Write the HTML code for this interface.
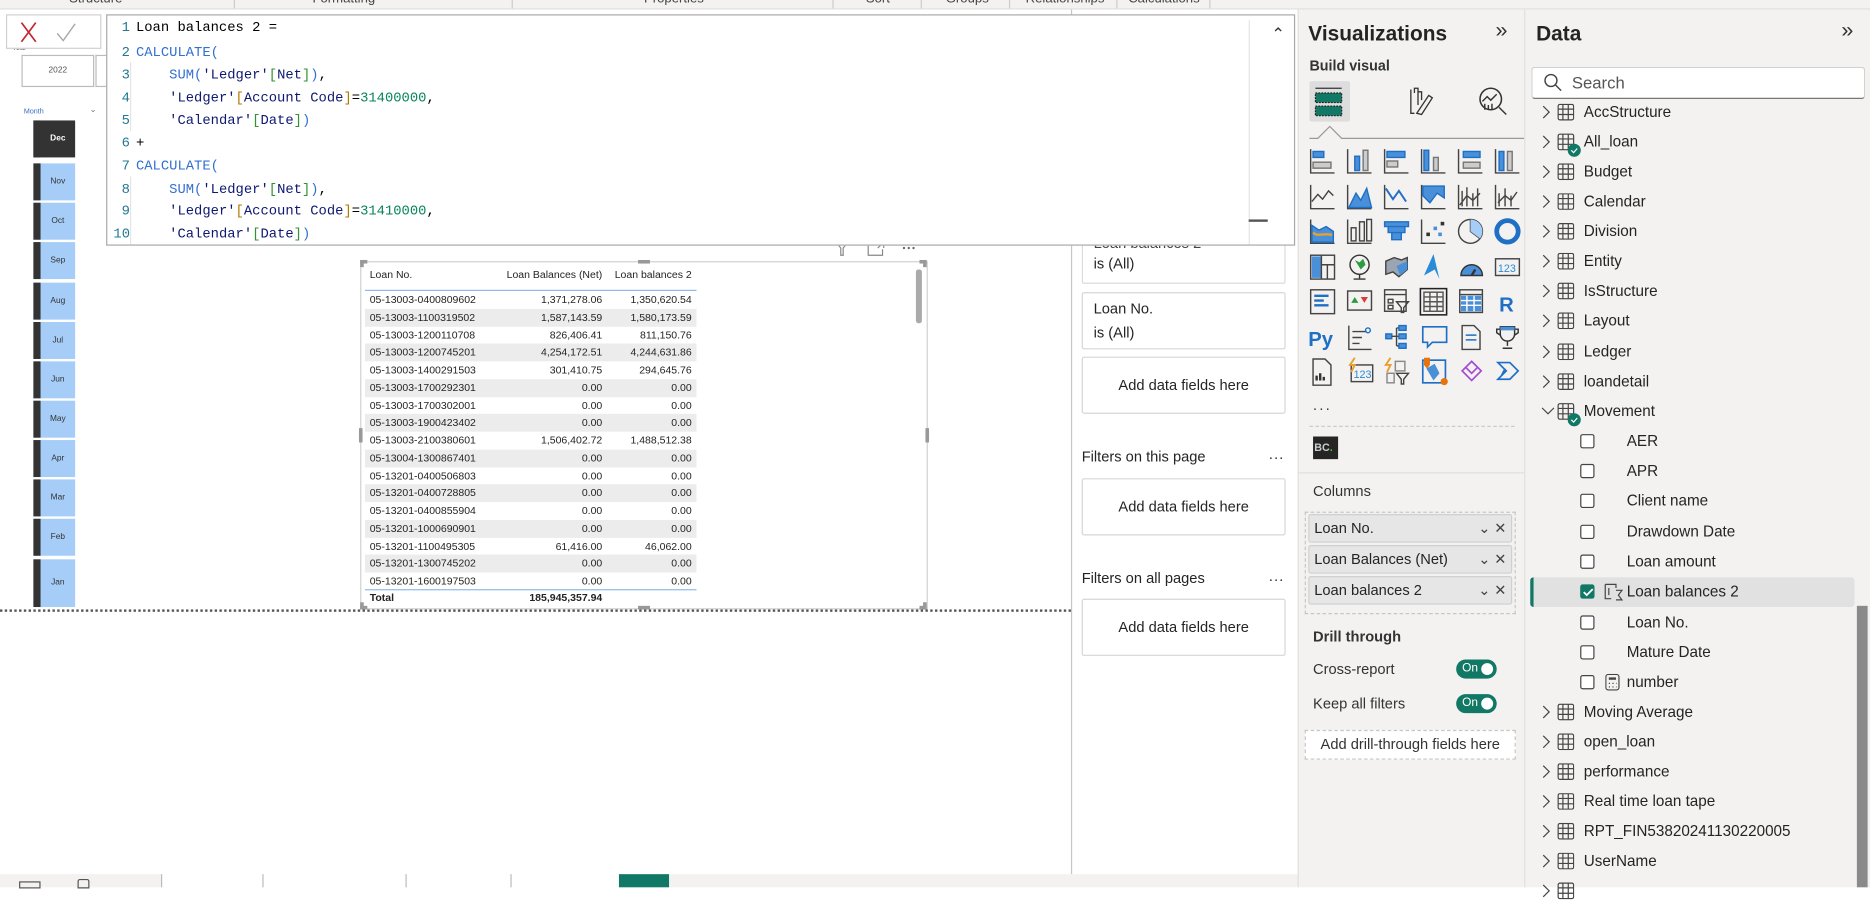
<!DOCTYPE html>
<html><head><meta charset="utf-8">
<style>
*{margin:0;padding:0;box-sizing:border-box}
html,body{width:1870px;height:887px;overflow:hidden;background:#fff}
#w{position:absolute;left:0;top:0;width:1568px;height:744px;transform:scale(1.19260);transform-origin:0 0;font-family:"Liberation Sans",sans-serif;color:#252423}
.a{position:absolute}
.mono{position:absolute;left:0;top:2px;font-family:"Liberation Mono",monospace;font-size:11.6px;white-space:pre;z-index:6}
.mono div{line-height:14px}
.ln{position:absolute;left:92px;width:17px;text-align:right;color:#237893}
.cd{position:absolute;left:114px;color:#000}
.f{color:#3370d0}.s{color:#0e1870}.b1{color:#319331}.b2{color:#b47900}.n{color:#098658}
.mb{position:absolute;left:28px;width:35px;height:31px;background:#a5cdf8;border-left:6px solid #333;font-size:7px;text-align:center;line-height:31px;color:#333}
.tr{position:absolute;left:306px;width:278px;height:14.75px;font-size:8.8px;line-height:14.75px;color:#252423}
.tr span{position:absolute}
.tr .c1{left:4px}.tr .c2{right:79px}.tr .c3{right:4px}
.g{background:#ececec}
.card{position:absolute;left:907px;width:171px;background:#fff;border:1px solid #d6d6d6;border-radius:2px;font-size:12.3px}
.ctr{text-align:center}
.ft{position:absolute;left:907px;font-size:12.3px;color:#252423}
.dot{position:absolute;left:1064px;font-size:12px;letter-spacing:1px}
.pill{position:absolute;left:1097px;width:171px;height:24px;background:#e6e6e6;border:1px solid #d0d0d0;border-radius:2px;font-size:12.3px;line-height:22px;padding-left:4px}
.pill i{position:absolute;right:4px;top:0;font-style:normal;font-size:12px;color:#444}
.ti{position:absolute;left:1292px;height:20px;font-size:12.8px;line-height:20px;color:#252423}
.ti .ch{position:absolute;left:0;top:4px}
.ti .tb{position:absolute;left:14px;top:3px}
.ti .tx{position:absolute;left:36px;white-space:nowrap}
.sub{position:absolute;left:1325px;height:20px;font-size:12.8px;line-height:20px}
.sub .cb{position:absolute;left:0;top:4px;width:12px;height:12px;border:1px solid #444;border-radius:2px;background:#fff}
.sub .tx{position:absolute;left:39px;white-space:nowrap}
.tog{position:absolute;left:1221px;width:34px;height:16px;background:#117865;border-radius:8px;color:#fff;font-size:10px;line-height:16px;padding-left:5px}
.tog b{position:absolute;right:3px;top:3px;width:10px;height:10px;border-radius:5px;background:#fff}
</style></head><body><div id="w">

<div class="a" style="left:0;top:0;width:1568px;height:8px;background:#f3f2f1;border-bottom:1px solid #e1dfdd;overflow:hidden">
 <div class="a" style="left:58px;top:-7px;font-size:11px;color:#444">Structure</div>
 <div class="a" style="left:196px;top:0;width:1px;height:8px;background:#ccc"></div>
 <div class="a" style="left:262px;top:-7px;font-size:11px;color:#444">Formatting</div>
 <div class="a" style="left:429px;top:0;width:1px;height:8px;background:#ccc"></div>
 <div class="a" style="left:540px;top:-7px;font-size:11px;color:#444">Properties</div>
 <div class="a" style="left:698px;top:0;width:1px;height:8px;background:#ccc"></div>
 <div class="a" style="left:726px;top:-7px;font-size:11px;color:#444">Sort</div>
 <div class="a" style="left:772px;top:0;width:1px;height:8px;background:#ccc"></div>
 <div class="a" style="left:793px;top:-7px;font-size:11px;color:#444">Groups</div>
 <div class="a" style="left:846px;top:0;width:1px;height:8px;background:#ccc"></div>
 <div class="a" style="left:860px;top:-7px;font-size:11px;color:#444">Relationships</div>
 <div class="a" style="left:936px;top:0;width:1px;height:8px;background:#ccc"></div>
 <div class="a" style="left:946px;top:-7px;font-size:11px;color:#444">Calculations</div>
 <div class="a" style="left:1014px;top:0;width:1px;height:8px;background:#ccc"></div>
</div>

<div class="a" style="left:10px;top:38px;font-size:6px;color:#555">Year</div>
<div class="a" style="left:18px;top:46px;width:61px;height:27px;border:1px solid #bbb;font-size:7px;text-align:center;line-height:26px;color:#555">2022</div>
<div class="a" style="left:80px;top:46px;width:10px;height:27px;border:1px solid #bbb;border-right:none"></div>
<div class="a" style="left:20px;top:91px;font-size:6px;color:#3a6fc0">Month</div>
<div class="a" style="left:75px;top:88px;font-size:7px;color:#777">&#8964;</div>
<div class="mb" style="top:101px;background:#333;color:#fff;font-weight:bold">Dec</div>
<div class="mb" style="top:137px">Nov</div>
<div class="mb" style="top:170px">Oct</div>
<div class="mb" style="top:203px">Sep</div>
<div class="mb" style="top:237px">Aug</div>
<div class="mb" style="top:270px">Jul</div>
<div class="mb" style="top:303px">Jun</div>
<div class="mb" style="top:336px">May</div>
<div class="mb" style="top:369px">Apr</div>
<div class="mb" style="top:402px">Mar</div>
<div class="mb" style="top:435px">Feb</div>
<div class="mb" style="top:469px;height:40px;line-height:40px">Jan</div>

<div class="a" style="left:0;top:511px;width:898px;height:0;border-top:2px dotted #555"></div>

<div class="a" style="left:302px;top:219px;width:476px;height:292px;border:1px solid #d0d0d0"></div>
<div class="a" style="left:302px;top:218px;width:6px;height:6px;border-left:3px solid #999;border-top:3px solid #999"></div>
<div class="a" style="left:771px;top:218px;width:6px;height:6px;border-right:3px solid #999;border-top:3px solid #999"></div>
<div class="a" style="left:302px;top:505px;width:6px;height:6px;border-left:3px solid #999;border-bottom:3px solid #999"></div>
<div class="a" style="left:771px;top:505px;width:6px;height:6px;border-right:3px solid #999;border-bottom:3px solid #999"></div>
<div class="a" style="left:535px;top:218px;width:10px;height:3px;background:#999"></div>
<div class="a" style="left:535px;top:508px;width:10px;height:3px;background:#999"></div>
<div class="a" style="left:301px;top:359px;width:3px;height:12px;background:#999"></div>
<div class="a" style="left:776px;top:359px;width:3px;height:12px;background:#999"></div>
<div class="a" style="left:768px;top:226px;width:5px;height:45px;background:#aaa;border-radius:2px"></div>
<svg class="a" style="left:698px;top:200px" width="80" height="16"><path d="M3 3h10l-4 5v6h-2v-6z" fill="none" stroke="#888"/><path d="M30 5h4M30 5v9h12v-5M38 3h5v5M43 3l-5 5" fill="none" stroke="#888"/><circle cx="60" cy="8" r="1" fill="#666"/><circle cx="64" cy="8" r="1" fill="#666"/><circle cx="68" cy="8" r="1" fill="#666"/></svg>

<div class="tr" style="top:223px"><span class="c1">Loan No.</span><span class="c2">Loan Balances (Net)</span><span class="c3">Loan balances 2</span></div>
<div class="a" style="left:306px;top:243px;width:278px;height:1px;background:#8fb8e8"></div>
<div class="tr" style="top:244px"><span class="c1">05-13003-0400809602</span><span class="c2">1,371,278.06</span><span class="c3">1,350,620.54</span></div>
<div class="tr g" style="top:258.75px"><span class="c1">05-13003-1100319502</span><span class="c2">1,587,143.59</span><span class="c3">1,580,173.59</span></div>
<div class="tr" style="top:273.5px"><span class="c1">05-13003-1200110708</span><span class="c2">826,406.41</span><span class="c3">811,150.76</span></div>
<div class="tr g" style="top:288.25px"><span class="c1">05-13003-1200745201</span><span class="c2">4,254,172.51</span><span class="c3">4,244,631.86</span></div>
<div class="tr" style="top:303px"><span class="c1">05-13003-1400291503</span><span class="c2">301,410.75</span><span class="c3">294,645.76</span></div>
<div class="tr g" style="top:317.75px"><span class="c1">05-13003-1700292301</span><span class="c2">0.00</span><span class="c3">0.00</span></div>
<div class="tr" style="top:332.5px"><span class="c1">05-13003-1700302001</span><span class="c2">0.00</span><span class="c3">0.00</span></div>
<div class="tr g" style="top:347.25px"><span class="c1">05-13003-1900423402</span><span class="c2">0.00</span><span class="c3">0.00</span></div>
<div class="tr" style="top:362px"><span class="c1">05-13003-2100380601</span><span class="c2">1,506,402.72</span><span class="c3">1,488,512.38</span></div>
<div class="tr g" style="top:376.75px"><span class="c1">05-13004-1300867401</span><span class="c2">0.00</span><span class="c3">0.00</span></div>
<div class="tr" style="top:391.5px"><span class="c1">05-13201-0400506803</span><span class="c2">0.00</span><span class="c3">0.00</span></div>
<div class="tr g" style="top:406.25px"><span class="c1">05-13201-0400728805</span><span class="c2">0.00</span><span class="c3">0.00</span></div>
<div class="tr" style="top:421px"><span class="c1">05-13201-0400855904</span><span class="c2">0.00</span><span class="c3">0.00</span></div>
<div class="tr g" style="top:435.75px"><span class="c1">05-13201-1000690901</span><span class="c2">0.00</span><span class="c3">0.00</span></div>
<div class="tr" style="top:450.5px"><span class="c1">05-13201-1100495305</span><span class="c2">61,416.00</span><span class="c3">46,062.00</span></div>
<div class="tr g" style="top:465.25px"><span class="c1">05-13201-1300745202</span><span class="c2">0.00</span><span class="c3">0.00</span></div>
<div class="tr" style="top:480px"><span class="c1">05-13201-1600197503</span><span class="c2">0.00</span><span class="c3">0.00</span></div>
<div class="a" style="left:306px;top:494px;width:278px;height:1px;background:#8fb8e8"></div>
<div class="tr" style="top:494px;font-weight:bold"><span class="c1">Total</span><span class="c2">185,945,357.94</span></div>

<div class="a" style="left:898px;top:8px;width:1px;height:725px;background:#c8c6c4"></div>
<div class="card" style="top:188px;height:50px;border-top:none"><div class="a" style="left:9px;top:26px">is (All)</div><div class="a" style="left:9px;top:9px;color:#444">Loan balances 2</div></div>
<div class="card" style="top:245px;height:48px"><div class="a" style="left:9px;top:6px">Loan No.</div><div class="a" style="left:9px;top:26px">is (All)</div></div>
<div class="card ctr" style="top:299px;height:48px;line-height:46px">Add data fields here</div>
<div class="ft" style="top:376px">Filters on this page</div><div class="dot" style="top:374px">...</div>
<div class="card ctr" style="top:401px;height:48px;line-height:46px">Add data fields here</div>
<div class="ft" style="top:478px">Filters on all pages</div><div class="dot" style="top:476px">...</div>
<div class="card ctr" style="top:502px;height:48px;line-height:46px">Add data fields here</div>

<div class="a" style="left:5px;top:12px;width:80px;height:29px;background:#fff;border:1px solid #d0d0d0;z-index:5"></div>
<svg class="a" style="left:14px;top:16px;z-index:5" width="64" height="22"><path d="M4 3L16 19M16 3L4 19" stroke="#c4262e" stroke-width="1.4" fill="none"/><path d="M34 12l5 6 10-14" stroke="#aaa" stroke-width="1.2" fill="none"/></svg>
<div class="a" style="left:89px;top:12px;width:997px;height:194px;background:#fff;border:1px solid #a8a8a8;z-index:5"></div>
<div class="a" style="left:1047px;top:17px;width:1px;height:188px;background:#e5e5e5;z-index:5"></div>
<div class="a" style="left:1066px;top:20px;font-size:14px;color:#333;z-index:5">&#8963;</div>
<div class="a" style="left:1047px;top:184px;width:16px;height:2px;background:#555;z-index:5"></div>
<div class="a" style="left:109px;top:52px;width:1px;height:58px;background:#e5e5e5;z-index:5"></div>
<div class="a" style="left:109px;top:148px;width:1px;height:57px;background:#e5e5e5;z-index:5"></div>
<div class="mono">
<div class="ln" style="top:15px">1</div><div class="cd" style="top:15px">Loan balances 2 =</div>
<div class="ln" style="top:36px">2</div><div class="cd f" style="top:36px">CALCULATE(</div>
<div class="ln" style="top:55px">3</div><div class="cd" style="top:55px">    <span class="f">SUM(</span><span class="s">'Ledger'</span><span class="b1">[</span><span class="s">Net</span><span class="b1">]</span><span class="f">)</span>,</div>
<div class="ln" style="top:74px">4</div><div class="cd" style="top:74px">    <span class="s">'Ledger'</span><span class="b2">[</span><span class="s">Account Code</span><span class="b2">]</span>=<span class="n">31400000</span>,</div>
<div class="ln" style="top:93px">5</div><div class="cd" style="top:93px">    <span class="s">'Calendar'</span><span class="b1">[</span><span class="s">Date</span><span class="b1">]</span><span class="f">)</span></div>
<div class="ln" style="top:112px">6</div><div class="cd" style="top:112px">+</div>
<div class="ln" style="top:131px">7</div><div class="cd f" style="top:131px">CALCULATE(</div>
<div class="ln" style="top:151px">8</div><div class="cd" style="top:151px">    <span class="f">SUM(</span><span class="s">'Ledger'</span><span class="b1">[</span><span class="s">Net</span><span class="b1">]</span><span class="f">)</span>,</div>
<div class="ln" style="top:169px">9</div><div class="cd" style="top:169px">    <span class="s">'Ledger'</span><span class="b2">[</span><span class="s">Account Code</span><span class="b2">]</span>=<span class="n">31410000</span>,</div>
<div class="ln" style="top:188px">10</div><div class="cd" style="top:188px">    <span class="s">'Calendar'</span><span class="b1">[</span><span class="s">Date</span><span class="b1">]</span><span class="f">)</span></div>
</div>

<div class="a" style="left:1088px;top:8px;width:190px;height:736px;background:#f3f2f1;border-left:1px solid #e1dfdd"></div>
<div class="a" style="left:1097px;top:18px;font-size:17.5px;font-weight:bold;color:#252423">Visualizations</div>
<div class="a" style="left:1254px;top:15px;font-size:18px;color:#333">&#187;</div>
<div class="a" style="left:1098px;top:48px;font-size:12px;font-weight:bold;color:#333">Build visual</div>
<div class="a" style="left:1098px;top:68px;width:34px;height:34px;background:#ddd;border-radius:2px"></div>
<svg class="a" style="left:1098px;top:68px" width="180" height="50">
<path d="M5 6h22" stroke="#333"/><rect x="5" y="10" width="22" height="8" fill="#117865" stroke="#222" stroke-dasharray="1.5 1"/><rect x="5" y="21" width="22" height="8" fill="#117865" stroke="#222" stroke-dasharray="1.5 1"/>
<path d="M85 7v20h3M88 10v-4h3v14M91 12v-3h3v7M90 27l10-15 3 2-9 14z" fill="none" stroke="#333" stroke-width="1.1"/>
<circle cx="152" cy="15" r="9" fill="none" stroke="#333" stroke-width="1.3"/><path d="M159 22l6 6M145 17l4-4 3 3 5-5M147 24v-5M150 24v-4M153 24v-5" stroke="#333" fill="none" stroke-width="1.2"/>
<path d="M-10 48h17l10-10 10 10h163" fill="none" stroke="#999"/>
</svg>

<svg class="a" style="left:1096px;top:122px" width="182" height="230" fill="none" stroke-width="1.2">
<g stroke="#444">
<path d="M3 3v20h20M34 3v20h20M65 3v20h20M96 3v20h20M127 3v20h20M158 3v20h20"/>
</g>
<g fill="#4a90d9" stroke="#1f6fc5"><rect x="5" y="5" width="9" height="5"/><rect x="40" y="9" width="4" height="12"/><rect x="67" y="5" width="15" height="5"/><rect x="98" y="4" width="4" height="17"/><rect x="131" y="5" width="14" height="5"/><rect x="161" y="5" width="4" height="16"/></g>
<g fill="#ccc" stroke="#777"><rect x="5" y="14" width="15" height="5"/><rect x="47" y="4" width="4" height="17"/><rect x="67" y="13" width="9" height="5"/><rect x="106" y="10" width="4" height="11"/><rect x="131" y="14" width="14" height="5"/><rect x="168" y="5" width="4" height="16"/></g>
<g transform="translate(0,30)">
<path d="M3 3v20h20M34 3v20h20M65 3v20h20M96 3v20h20M127 3v20h20M158 3v20h20" stroke="#444"/>
<path d="M4 17l5-6 4 4 5-7 4 4" stroke="#444"/><path d="M35 22l6-12 4 6 5-10 4 16z" fill="#4a90d9" stroke="#1f6fc5"/>
<path d="M66 6l6 9 5-7 6 9" stroke="#1f6fc5" stroke-width="1.6"/><path d="M97 4v8l6 6 6-8 6 4v-10z" fill="#4a90d9" stroke="#1f6fc5"/>
<path d="M130 8v13M134 5v16M139 10v11M143 6v15M128 20l6-8 5 4 6-6" stroke="#444"/><path d="M161 10v11M166 6v15M171 12v9M160 18l6-6 5 4 5-7" stroke="#444"/>
</g>
<g transform="translate(0,59)">
<path d="M3 3v20h20M34 3v20h20M96 3v20h20" stroke="#444"/>
<path d="M4 8l6 4 6-3 6 4v9h-18z" fill="#4a90d9" stroke="#1f6fc5"/><path d="M5 14c4 4 8 0 16 2" stroke="#e8a030" stroke-width="2"/>
<rect x="37" y="10" width="4" height="11" stroke="#444"/><rect x="44" y="5" width="4" height="16" stroke="#444"/><rect x="50" y="3" width="4" height="18" stroke="#444"/>
<path d="M65 5h20v4h-20zM68 9h14v5h-14zM71 14h8v6h-8z" fill="#4a90d9" stroke="#1f6fc5"/>
<rect x="100" y="14" width="3" height="3" fill="#333"/><rect x="106" y="9" width="3" height="3" fill="#4a90d9"/><rect x="112" y="5" width="3" height="3" fill="#333"/><rect x="110" y="14" width="3" height="3" fill="#4a90d9"/>
<circle cx="137" cy="13" r="10" stroke="#444"/><path d="M137 3v10l8 6" stroke="#444"/><path d="M137 3a10 10 0 0 1 8 16l-8-6z" fill="#a5cdf8"/>
<circle cx="168" cy="13" r="9" stroke="#1f6fc5" stroke-width="4"/>
</g>
<g transform="translate(0,89)">
<rect x="3" y="3" width="20" height="20" stroke="#444"/><rect x="4" y="4" width="8" height="18" fill="#4a90d9"/><path d="M12 3v20M12 11h11M17 11v12" stroke="#444"/>
<circle cx="44" cy="11" r="8" stroke="#333"/><path d="M40 7l4 2 3-3 2 5-4 4z" fill="#2a9d3e"/><path d="M44 19v4M39 23h10" stroke="#333"/>
<path d="M66 8l7-3 6 2 5-2v10l-7 6-5-4-6 2z" fill="#9aa5b1" stroke="#444"/><path d="M75 12l9-4v7l-6 5z" fill="#4a90d9"/>
<path d="M106 2l-8 18 9-5 4 8z" fill="#2a8bd6"/>
<path d="M129 20a9 9 0 0 1 18 0z" fill="#4a90d9" stroke="#333"/><path d="M138 20l3-5" stroke="#333" stroke-width="2"/>
<rect x="158" y="6" width="20" height="14" stroke="#444"/><text x="160" y="17" font-size="9" fill="#2a8bd6" stroke="none" font-family="Liberation Sans">123</text>
</g>
<g transform="translate(0,118)">
<rect x="3" y="3" width="20" height="20" stroke="#444"/><path d="M6 8h12M6 12h8M6 16h12" stroke="#1f6fc5" stroke-width="2"/>
<rect x="34" y="4" width="20" height="16" stroke="#444"/><path d="M37 14l3-5 3 5z" fill="#2a9d3e"/><path d="M45 9h6l-3 5z" fill="#d83b3b"/>
<rect x="65" y="3" width="18" height="18" stroke="#444"/><path d="M65 7h18M68 11h4v3h-4zM68 16h4v3h-4zM75 13h10l-4 5v4h-2v-4z" stroke="#444"/>
<rect x="95" y="2" width="22" height="22" stroke="#222" stroke-width="1.3"/><rect x="98" y="5" width="16" height="16" stroke="#555"/><path d="M98 9h16M98 13h16M98 17h16M103 5v16M109 5v16" stroke="#555"/>
<rect x="128" y="3" width="19" height="19" stroke="#444"/><path d="M128 7h19" stroke="#444"/><rect x="129" y="8" width="17" height="13" fill="#4a90d9"/><path d="M129 12h17M129 16h17M134 8v13M140 8v13" stroke="#fff"/>
<text x="161" y="21" font-size="17" font-weight="bold" fill="#1f6fc5" stroke="none" font-family="Liberation Sans">R</text>
</g>
<g transform="translate(0,148)">
<text x="1" y="20" font-size="17" font-weight="bold" fill="#1f6fc5" stroke="none" font-family="Liberation Sans">Py</text>
<path d="M35 3v20h19M38 8h12M38 13h8M38 18h6" stroke="#444"/><circle cx="51" cy="7" r="2" stroke="#1f6fc5"/>
<rect x="66" y="10" width="5" height="4" stroke="#1f6fc5" fill="#4a90d9"/><path d="M71 12h4M75 5v15M75 5h2M75 12h2M75 20h2" stroke="#444"/><rect x="77" y="3" width="6" height="4" fill="#4a90d9" stroke="#1f6fc5"/><rect x="77" y="10" width="6" height="4" fill="#4a90d9" stroke="#1f6fc5"/><rect x="77" y="18" width="6" height="4" fill="#4a90d9" stroke="#1f6fc5"/>
<path d="M97 4h20v13h-12l-4 4v-4h-4z" stroke="#1f6fc5" stroke-width="1.4"/>
<path d="M130 3h10l5 5v15h-15z" stroke="#444"/><path d="M133 11h9M133 15h9" stroke="#1f6fc5"/>
<path d="M162 4h12v6a6 6 0 0 1-12 0zM168 16v4M164 22h8M162 6h-3v3l3 2M174 6h3v3l-3 2" stroke="#333"/><path d="M162 4h12v3h-12z" fill="#4a90d9"/>
</g>
<g transform="translate(0,177)">
<path d="M5 2h10l5 5v17h-15z" stroke="#444"/><path d="M8 20v-4M11 20v-6M14 20v-3" stroke="#333" stroke-width="2"/>
<rect x="37" y="7" width="18" height="14" stroke="#444"/><text x="39" y="18" font-size="9" fill="#2a8bd6" stroke="none" font-family="Liberation Sans">123</text><path d="M40 1l-4 6h4l-3 6" stroke="#e8a030" stroke-width="1.6"/>
<path d="M70 1l-4 6h4l-3 6" stroke="#e8a030" stroke-width="1.6"/><rect x="74" y="4" width="8" height="8" stroke="#888"/><rect x="67" y="14" width="6" height="8" stroke="#888"/><path d="M75 14h10l-4 5v4h-2v-4z" stroke="#444"/>
<rect x="97" y="3" width="19" height="19" stroke="#1f6fc5" stroke-width="1.4"/><path d="M100 10l7-4 4 8-5 6z" fill="#4a90d9"/><circle cx="115" cy="21" r="3" fill="#e8720c" stroke="none"/><path d="M98 1h5v6l-2.5 3-2.5-3z" fill="#e8720c" stroke="none"/>
<path d="M138 4l8 8-8 8-8-8zM133 9l5 5 5-5" stroke="#a54bd1" stroke-width="1.4"/>
<path d="M160 5h10l7 7-7 7h-10l7-7zM166 10l-3 6" stroke="#1f6fc5" stroke-width="1.4"/>
</g>
<text x="5" y="222" font-size="12" fill="#333" stroke="none" font-family="Liberation Sans" letter-spacing="2">...</text>
</svg>
<div class="a" style="left:1098px;top:357px;width:172px;border-top:1px dashed #ccc"></div>
<div class="a" style="left:1101px;top:366px;width:21px;height:19px;background:#252525;color:#ccc;font-size:9px;font-weight:bold;line-height:19px;padding-left:1px">BC<span style="color:#3c3">.</span></div>
<div class="a" style="left:1088px;top:396px;width:190px;height:1px;background:#e1dfdd"></div>
<div class="a" style="left:1101px;top:405px;font-size:12.3px;color:#333">Columns</div>
<div class="a" style="left:1094px;top:429px;width:177px;height:86px;border:1px dashed #c8c6c4"></div>
<div class="pill" style="top:431px">Loan No.<i>&#8964; &#10005;</i></div>
<div class="pill" style="top:457px">Loan Balances (Net)<i>&#8964; &#10005;</i></div>
<div class="pill" style="top:483px">Loan balances 2<i>&#8964; &#10005;</i></div>
<div class="a" style="left:1101px;top:527px;font-size:12.3px;font-weight:bold;color:#333">Drill through</div>
<div class="a" style="left:1101px;top:554px;font-size:12.3px;color:#333">Cross-report</div>
<div class="tog" style="top:553px">On<b></b></div>
<div class="a" style="left:1101px;top:583px;font-size:12.3px;color:#333">Keep all filters</div>
<div class="tog" style="top:582px">On<b></b></div>
<div class="a" style="left:1094px;top:612px;width:177px;height:25px;border:1px dashed #c8c6c4;background:#fff;font-size:12.3px;line-height:23px;text-align:center;color:#333">Add drill-through fields here</div>

<div class="a" style="left:1278px;top:8px;width:290px;height:736px;background:#f3f2f1;border-left:1px solid #e1dfdd"></div>
<div class="a" style="left:1288px;top:18px;font-size:17.5px;font-weight:bold;color:#252423">Data</div>
<div class="a" style="left:1544px;top:15px;font-size:18px;color:#333">&#187;</div>
<div class="a" style="left:1284px;top:56px;width:280px;height:27px;background:#fff;border:1px solid #d0d0d0;border-bottom:1.5px solid #777;border-radius:3px"></div>
<svg class="a" style="left:1294px;top:61px" width="16" height="16"><circle cx="6.5" cy="6.5" r="5" fill="none" stroke="#444" stroke-width="1.2"/><path d="M10 10l5 5" stroke="#444" stroke-width="1.2"/></svg>
<div class="a" style="left:1318px;top:61px;font-size:14px;color:#555">Search</div>

<svg width="0" height="0" style="position:absolute"><defs>
<g id="tb"><rect x="0.5" y="0.5" width="13" height="13" rx="1.5" fill="none" stroke="#444"/><path d="M0.5 4.5h13M0.5 9h13M4.5 0.5v13M9 0.5v13" stroke="#444" fill="none"/></g>
<path id="chr" d="M2 1l5 5-5 5" fill="none" stroke="#444"/>
</defs></svg>

<div class="ti" style="top:84px"><svg class="ch" width="10" height="12"><use href="#chr"/></svg><svg class="tb" width="14" height="14"><use href="#tb"/></svg><span class="tx">AccStructure</span></div>
<div class="ti" style="top:109px"><svg class="ch" width="10" height="12"><use href="#chr"/></svg><svg class="tb" width="20" height="20" style="overflow:visible"><use href="#tb"/><circle cx="14" cy="14" r="5.5" fill="#117865"/><path d="M11.5 14l2 2 3-3.5" stroke="#fff" fill="none"/></svg><span class="tx">All_loan</span></div>
<div class="ti" style="top:134px"><svg class="ch" width="10" height="12"><use href="#chr"/></svg><svg class="tb" width="14" height="14"><use href="#tb"/></svg><span class="tx">Budget</span></div>
<div class="ti" style="top:159px"><svg class="ch" width="10" height="12"><use href="#chr"/></svg><svg class="tb" width="14" height="14"><use href="#tb"/></svg><span class="tx">Calendar</span></div>
<div class="ti" style="top:184px"><svg class="ch" width="10" height="12"><use href="#chr"/></svg><svg class="tb" width="14" height="14"><use href="#tb"/></svg><span class="tx">Division</span></div>
<div class="ti" style="top:209px"><svg class="ch" width="10" height="12"><use href="#chr"/></svg><svg class="tb" width="14" height="14"><use href="#tb"/></svg><span class="tx">Entity</span></div>
<div class="ti" style="top:234px"><svg class="ch" width="10" height="12"><use href="#chr"/></svg><svg class="tb" width="14" height="14"><use href="#tb"/></svg><span class="tx">IsStructure</span></div>
<div class="ti" style="top:259px"><svg class="ch" width="10" height="12"><use href="#chr"/></svg><svg class="tb" width="14" height="14"><use href="#tb"/></svg><span class="tx">Layout</span></div>
<div class="ti" style="top:285px"><svg class="ch" width="10" height="12"><use href="#chr"/></svg><svg class="tb" width="14" height="14"><use href="#tb"/></svg><span class="tx">Ledger</span></div>
<div class="ti" style="top:310px"><svg class="ch" width="10" height="12"><use href="#chr"/></svg><svg class="tb" width="14" height="14"><use href="#tb"/></svg><span class="tx">loandetail</span></div>
<div class="ti" style="top:335px"><svg class="ch" width="12" height="12"><path d="M1 3l5 5 5-5" fill="none" stroke="#444"/></svg><svg class="tb" width="20" height="20" style="overflow:visible"><use href="#tb"/><circle cx="14" cy="14" r="5.5" fill="#117865"/><path d="M11.5 14l2 2 3-3.5" stroke="#fff" fill="none"/></svg><span class="tx">Movement</span></div>

<div class="sub" style="top:360px"><span class="cb"></span><span class="tx">AER</span></div>
<div class="sub" style="top:385px"><span class="cb"></span><span class="tx">APR</span></div>
<div class="sub" style="top:410px"><span class="cb"></span><span class="tx">Client name</span></div>
<div class="sub" style="top:436px"><span class="cb"></span><span class="tx">Drawdown Date</span></div>
<div class="sub" style="top:461px"><span class="cb"></span><span class="tx">Loan amount</span></div>
<div class="a" style="left:1283px;top:484px;width:272px;height:25px;background:#e1e1e1;border-radius:3px;border-left:3px solid #117865"></div>
<div class="sub" style="top:486px"><span class="cb" style="background:#117865;border-color:#117865"></span><svg class="a" style="left:1px;top:5px" width="11" height="11"><path d="M2 5.5l2.5 2.5 5-5" stroke="#fff" stroke-width="1.5" fill="none"/></svg><svg class="a" style="left:20px;top:3px" width="16" height="16"><path d="M1 1h9v3M1 1v12h5M4 4v6M10 6h5l-3 4 3 4h-5" fill="none" stroke="#444"/></svg><span class="tx">Loan balances 2</span></div>
<div class="sub" style="top:512px"><span class="cb"></span><span class="tx">Loan No.</span></div>
<div class="sub" style="top:537px"><span class="cb"></span><span class="tx">Mature Date</span></div>
<div class="sub" style="top:562px"><span class="cb"></span><svg class="a" style="left:21px;top:3px" width="13" height="15"><rect x="0.5" y="0.5" width="11" height="13" rx="2" fill="none" stroke="#444"/><rect x="3" y="3" width="6" height="2" fill="#444"/><path d="M3 8h1M6 8h1M9 8h0.5M3 11h1M6 11h1M9 11h0.5" stroke="#444"/></svg><span class="tx">number</span></div>

<div class="ti" style="top:587px"><svg class="ch" width="10" height="12"><use href="#chr"/></svg><svg class="tb" width="14" height="14"><use href="#tb"/></svg><span class="tx">Moving Average</span></div>
<div class="ti" style="top:612px"><svg class="ch" width="10" height="12"><use href="#chr"/></svg><svg class="tb" width="14" height="14"><use href="#tb"/></svg><span class="tx">open_loan</span></div>
<div class="ti" style="top:637px"><svg class="ch" width="10" height="12"><use href="#chr"/></svg><svg class="tb" width="14" height="14"><use href="#tb"/></svg><span class="tx">performance</span></div>
<div class="ti" style="top:662px"><svg class="ch" width="10" height="12"><use href="#chr"/></svg><svg class="tb" width="14" height="14"><use href="#tb"/></svg><span class="tx">Real time loan tape</span></div>
<div class="ti" style="top:687px"><svg class="ch" width="10" height="12"><use href="#chr"/></svg><svg class="tb" width="14" height="14"><use href="#tb"/></svg><span class="tx">RPT_FIN53820241130220005</span></div>
<div class="ti" style="top:712px"><svg class="ch" width="10" height="12"><use href="#chr"/></svg><svg class="tb" width="14" height="14"><use href="#tb"/></svg><span class="tx">UserName</span></div>
<div class="ti" style="top:737px"><svg class="ch" width="10" height="12"><use href="#chr"/></svg><svg class="tb" width="14" height="14"><use href="#tb"/></svg></div>
<div class="a" style="left:1557px;top:508px;width:9px;height:236px;background:#8a8a8a"></div>

<div class="a" style="left:0;top:733px;width:1088px;height:11px;background:#f3f2f1"></div>
<div class="a" style="left:135px;top:733px;width:384px;height:11px;background:#fff"></div>
<div class="a" style="left:135px;top:733px;width:1px;height:11px;background:#bbb"></div>
<div class="a" style="left:220px;top:733px;width:1px;height:11px;background:#bbb"></div>
<div class="a" style="left:340px;top:733px;width:1px;height:11px;background:#bbb"></div>
<div class="a" style="left:428px;top:733px;width:1px;height:11px;background:#bbb"></div>
<div class="a" style="left:519px;top:733px;width:42px;height:11px;background:#117865"></div>
<div class="a" style="left:16px;top:739px;width:18px;height:6px;border:1px solid #555"></div>
<div class="a" style="left:65px;top:737px;width:10px;height:8px;border:1px solid #555;border-radius:2px 2px 0 0"></div>
</div></body></html>
